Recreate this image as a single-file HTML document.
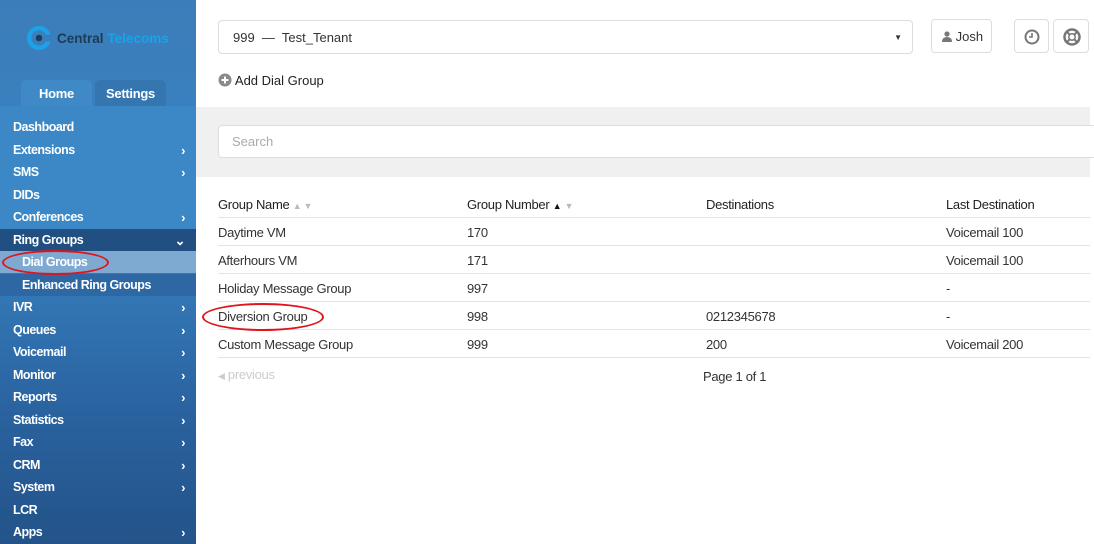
<!DOCTYPE html>
<html><head><meta charset="utf-8"><style>
*{box-sizing:border-box;margin:0;padding:0}
body{width:1094px;height:544px;overflow:hidden;font-family:"Liberation Sans",sans-serif;background:#fff;position:relative;color:#333}
#sb{position:absolute;left:0;top:0;width:196px;height:544px;background:linear-gradient(#3b7db9,#3984c3 40%,#2a63a0 75%,#235389)}
.logo{position:absolute;left:27px;top:26px;display:flex;align-items:center;font-weight:bold;font-size:13.5px}
.tab{position:absolute;top:80px;height:26px;width:71px;border-radius:5px 5px 0 0;color:#fff;font-weight:bold;font-size:13px;text-align:center;line-height:28px;letter-spacing:-.3px}
.mi{position:absolute;left:0;width:196px;height:22px;color:#fff;font-weight:bold;font-size:12.5px;line-height:23px;padding-left:13px;letter-spacing:-.5px}
.mi i{position:absolute;right:11px;top:0;font-style:normal;font-size:13px;font-weight:bold}
#main{position:absolute;left:196px;top:0;right:0;bottom:0}
.box{position:absolute;border:1px solid #ddd;border-radius:4px;background:#fff}
.th,.td{position:absolute;font-size:13px;letter-spacing:-.3px}
.th{color:#222}
.line{position:absolute;left:22px;right:4px;height:1px;background:#e3e3e3}
</style></head><body>
<div id="sb">
 <div class="logo"><svg width="24" height="24" viewBox="0 0 22 22"><circle cx="11" cy="11" r="9" fill="none" stroke="#1aa3e8" stroke-width="4"/><rect x="16" y="8" width="6" height="6" fill="#3b7db9"/><circle cx="11" cy="11" r="3" fill="#1c3e5e"/></svg><span style="color:#1e3a55;margin-left:6px">Central</span><span style="color:#1aa3e8;margin-left:4px">Telecoms</span></div>
 <div class="tab" style="left:21px;background:#3f8ac6">Home</div>
 <div class="tab" style="left:95px;background:#3676b0">Settings</div>
 <div style="position:absolute;top:106px;left:0;width:196px;height:123px;background:#3c87c5"></div>
 <div class="mi" style="top:116px">Dashboard</div>
 <div class="mi" style="top:139px">Extensions<i>›</i></div>
 <div class="mi" style="top:161px">SMS<i>›</i></div>
 <div class="mi" style="top:184px">DIDs</div>
 <div class="mi" style="top:206px">Conferences<i>›</i></div>
 <div class="mi" style="top:229px;background:#224f82">Ring Groups<i>⌄</i></div>
 <div class="mi" style="top:251px;background:#7eaad2;padding-left:22px">Dial Groups</div>
 <div class="mi" style="top:274px;background:#2d67a4;padding-left:22px">Enhanced Ring Groups</div>
 <div class="mi" style="top:296px">IVR<i>›</i></div>
 <div class="mi" style="top:319px">Queues<i>›</i></div>
 <div class="mi" style="top:341px">Voicemail<i>›</i></div>
 <div class="mi" style="top:364px">Monitor<i>›</i></div>
 <div class="mi" style="top:386px">Reports<i>›</i></div>
 <div class="mi" style="top:409px">Statistics<i>›</i></div>
 <div class="mi" style="top:431px">Fax<i>›</i></div>
 <div class="mi" style="top:454px">CRM<i>›</i></div>
 <div class="mi" style="top:476px">System<i>›</i></div>
 <div class="mi" style="top:499px">LCR</div>
 <div class="mi" style="top:521px">Apps<i>›</i></div>
 <div style="position:absolute;left:2px;top:250px;width:107px;height:25px;border:2.5px solid #e0141b;border-radius:50%"></div>
</div>
<div id="main">
 <div class="box" style="left:22px;top:20px;width:695px;height:34px;font-size:13px;line-height:33px;padding-left:14px">999 &nbsp;—&nbsp; Test_Tenant<span style="position:absolute;right:10px;font-size:8px;color:#333">▼</span></div>
 <div class="box" style="left:735px;top:19px;width:61px;height:34px;font-size:13px;line-height:33px;padding-left:10px"><svg width="10" height="11" viewBox="0 0 10 11" style="vertical-align:-1px"><circle cx="5" cy="3" r="2.6" fill="#777"/><path d="M0 11 Q0 6 5 6 Q10 6 10 11Z" fill="#777"/></svg> Josh</div>
 <div class="box" style="left:818px;top:19px;width:35px;height:34px"><svg width="35" height="34" viewBox="0 0 35 34"><circle cx="17" cy="17" r="6.5" fill="none" stroke="#777" stroke-width="2"/><path d="M17 13v4h-3" stroke="#777" stroke-width="1.6" fill="none"/></svg></div>
 <div class="box" style="left:857px;top:19px;width:36px;height:34px"><svg width="36" height="34" viewBox="0 0 36 34"><circle cx="18" cy="17" r="7.5" fill="none" stroke="#777" stroke-width="2.5"/><circle cx="18" cy="17" r="3.2" fill="none" stroke="#777" stroke-width="1.5"/><path d="M13 12l3 3M23 12l-3 3M13 22l3-3M23 22l-3-3" stroke="#777" stroke-width="2"/></svg></div>
 <div style="position:absolute;left:22px;top:73px;font-size:13px;color:#222"><svg width="14" height="14" viewBox="0 0 14 14" style="vertical-align:-2px"><circle cx="7" cy="7" r="6.5" fill="#8a8a8a"/><path d="M7 3.5v7M3.5 7h7" stroke="#fff" stroke-width="2"/></svg> Add Dial Group</div>
 <div style="position:absolute;left:0;right:4px;top:107px;height:70px;background:#f0f0f0"></div>
 <div class="box" style="left:22px;top:125px;width:900px;height:33px;font-size:13px;line-height:32px;padding-left:13px;color:#aaa">Search</div>
 <div class="th" style="left:22px;top:197px">Group Name <span style="font-size:9px;color:#bbb">▲ ▼</span></div>
 <div class="th" style="left:271px;top:197px">Group Number <span style="font-size:9px;color:#111">▲</span> <span style="font-size:9px;color:#bbb">▼</span></div>
 <div class="th" style="left:510px;top:197px">Destinations</div>
 <div class="th" style="left:750px;top:197px">Last Destination</div>
 <div class="line" style="top:217px"></div>
 <div class="td" style="left:22px;top:225px">Daytime VM</div><div class="td" style="left:271px;top:225px">170</div><div class="td" style="left:750px;top:225px">Voicemail 100</div>
 <div class="line" style="top:245px"></div>
 <div class="td" style="left:22px;top:253px">Afterhours VM</div><div class="td" style="left:271px;top:253px">171</div><div class="td" style="left:750px;top:253px">Voicemail 100</div>
 <div class="line" style="top:273px"></div>
 <div class="td" style="left:22px;top:281px">Holiday Message Group</div><div class="td" style="left:271px;top:281px">997</div><div class="td" style="left:750px;top:281px">-</div>
 <div class="line" style="top:301px"></div>
 <div class="td" style="left:22px;top:309px">Diversion Group</div><div class="td" style="left:271px;top:309px">998</div><div class="td" style="left:510px;top:309px">0212345678</div><div class="td" style="left:750px;top:309px">-</div>
 <div class="line" style="top:329px"></div>
 <div class="td" style="left:22px;top:337px">Custom Message Group</div><div class="td" style="left:271px;top:337px">999</div><div class="td" style="left:510px;top:337px">200</div><div class="td" style="left:750px;top:337px">Voicemail 200</div>
 <div class="line" style="top:357px"></div>
 <div class="td" style="left:22px;top:367px;color:#ccc"><span style="font-size:9px">◀</span> previous</div>
 <div class="td" style="left:507px;top:369px">Page 1 of 1</div>
 <div style="position:absolute;left:6px;top:303px;width:122px;height:28px;border:2.5px solid #e0141b;border-radius:50%"></div>
</div>
</body></html>
